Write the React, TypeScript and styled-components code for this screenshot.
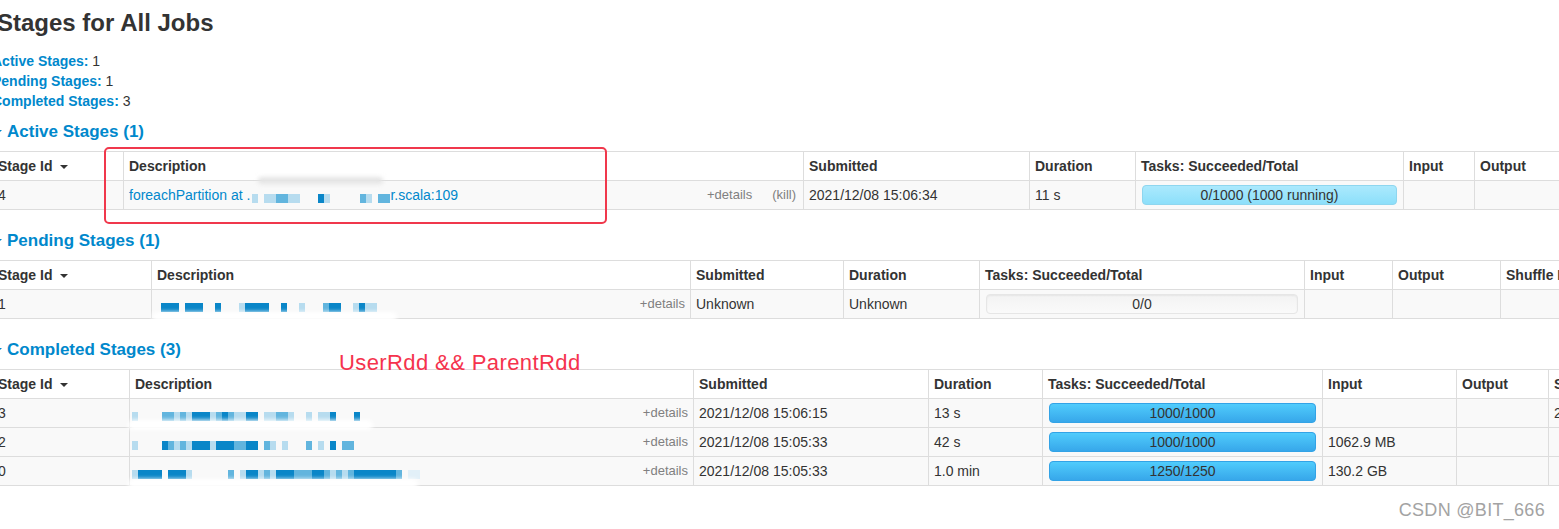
import React from "react";
import styled, { createGlobalStyle } from "styled-components";

const GlobalStyle = createGlobalStyle`
  html, body {
    margin: 0;
    padding: 0;
    background: #fff;
  }
  body {
    font-family: "Liberation Sans", Arial, Helvetica, sans-serif;
    font-size: 14px;
    color: #333;
    overflow: hidden;
  }
`;

const Page = styled.div`
  position: relative;
  width: 1559px;
  height: 529px;
  overflow: hidden;
`;

const Content = styled.div`
  margin-left: -8px;
  width: 1900px;
`;

const Title = styled.h3`
  margin: 8px 0 0 5px;
  font-size: 24px;
  line-height: 30px;
  font-weight: bold;
  color: #333;
`;

const Summary = styled.ul`
  list-style: none;
  margin: 13px 0 0;
  padding: 0;
  line-height: 20px;
`;

const SummaryLabel = styled.strong`
  color: #0088cc;
`;

const SectionTitle = styled.h4<{ $first?: boolean }>`
  display: flex;
  align-items: center;
  gap: 5px;
  margin: ${(p) => (p.$first ? "10px" : "20px")} 0 8px;
  font-size: 17px;
  line-height: 22px;
  font-weight: bold;
  color: #0088cc;
`;

const Arrow = styled.span`
  width: 0;
  height: 0;
  border-left: 5px solid transparent;
  border-right: 5px solid transparent;
  border-top: 5px solid #0088cc;
`;

const Table = styled.table`
  border-collapse: collapse;
  table-layout: fixed;
`;

const Th = styled.th<{ $w: number }>`
  box-sizing: border-box;
  width: ${(p) => p.$w}px;
  height: 29px;
  padding: 4px 5px;
  border: 1px solid #ddd;
  background: #fff;
  text-align: left;
  font-weight: bold;
  line-height: 20px;
  white-space: nowrap;
  overflow: hidden;
`;

const Td = styled.td`
  box-sizing: border-box;
  height: 29px;
  padding: 4px 5px;
  border: 1px solid #ddd;
  background: #f9f9f9;
  line-height: 20px;
  white-space: nowrap;
  overflow: hidden;
  vertical-align: middle;
`;

const Caret = styled.span`
  display: inline-block;
  margin-left: 8px;
  vertical-align: middle;
  width: 0;
  height: 0;
  border-left: 4px solid transparent;
  border-right: 4px solid transparent;
  border-top: 4px solid #333;
`;

const DescBody = styled.div`
  display: flex;
  align-items: center;
  height: 20px;
`;

const DescLink = styled.a`
  color: #0088cc;
  text-decoration: none;
`;

const Details = styled.span`
  margin-left: auto;
  color: #808080;
  font-size: 13px;
`;

const Kill = styled.span`
  margin-left: 20px;
  margin-right: 2px;
  color: #808080;
  font-size: 13px;
`;

const MosaicRow = styled.span<{ $offset: number }>`
  display: inline-flex;
  align-items: flex-end;
  box-sizing: border-box;
  height: 20px;
  padding-bottom: 2px;
  margin-left: ${(p) => p.$offset}px;
`;

const Pixel = styled.span<{ $c: string }>`
  width: 6px;
  height: 9px;
  background: ${(p) => p.$c};
`;

const Progress = styled.div<{ $kind: "running" | "done" | "empty" }>`
  box-sizing: border-box;
  height: 20px;
  margin: 0 1px;
  border-radius: 4px;
  text-align: center;
  line-height: 18px;
  color: #333;
  border: 1px solid
    ${(p) =>
      p.$kind === "running" ? "#8ed6ef" : p.$kind === "done" ? "#33a3e6" : "#e6e6e6"};
  background: ${(p) =>
    p.$kind === "running"
      ? "linear-gradient(to bottom, #abe9fd, #8cdffa)"
      : p.$kind === "done"
      ? "linear-gradient(to bottom, #50ccfc, #37a7ea)"
      : "linear-gradient(to bottom, #f3f3f3, #fafafa)"};
  box-shadow: ${(p) =>
    p.$kind === "empty" ? "inset 0 1px 2px rgba(0,0,0,0.06)" : "none"};
`;

const Smudge = styled.div<{ $gray?: boolean }>`
  position: absolute;
  background: ${(p) => (p.$gray ? "#e4e4e4" : "#fff")};
  border-radius: 8px;
  filter: blur(2px);
`;

const RedBox = styled.div`
  position: absolute;
  left: 104px;
  top: 147px;
  width: 503px;
  height: 77px;
  box-sizing: border-box;
  border: 2px solid #f0384c;
  border-radius: 5px;
`;

const Note = styled.div`
  position: absolute;
  left: 339px;
  top: 352px;
  font-size: 22px;
  line-height: 22px;
  letter-spacing: 0.4px;
  color: #f5334d;
`;

const Watermark = styled.div`
  position: absolute;
  right: 14px;
  top: 501px;
  font-size: 18px;
  line-height: 18px;
  color: #a3a3a3;
  letter-spacing: 0.3px;
`;

const PALETTE: Record<string, string> = {
  l: "#e2f0f8",
  L: "#b7dcef",
  M: "#62b5de",
  D: "#0a86c8",
};

const Mosaic = ({ pattern, offset = 0 }: { pattern: string; offset?: number }) => (
  <MosaicRow $offset={offset}>
    {pattern.split("").map((ch, i) => (
      <Pixel key={i} $c={PALETTE[ch] ?? "transparent"} />
    ))}
  </MosaicRow>
);

type Col = [string, number];

const Header = ({ cols }: { cols: Col[] }) => (
  <thead>
    <tr>
      {cols.map(([title, w], i) => (
        <Th key={title} $w={w}>
          {title}
          {i === 0 && <Caret />}
        </Th>
      ))}
    </tr>
  </thead>
);

const activeCols: Col[] = [
  ["Stage Id", 131],
  ["Description", 680],
  ["Submitted", 226],
  ["Duration", 106],
  ["Tasks: Succeeded/Total", 268],
  ["Input", 71],
  ["Output", 130],
  ["Shuffle Read", 130],
  ["Shuffle Write", 130],
];

const pendingCols: Col[] = [
  ["Stage Id", 159],
  ["Description", 539],
  ["Submitted", 153],
  ["Duration", 136],
  ["Tasks: Succeeded/Total", 325],
  ["Input", 88],
  ["Output", 108],
  ["Shuffle Read", 130],
  ["Shuffle Write", 130],
];

const completedCols: Col[] = [
  ["Stage Id", 137],
  ["Description", 564],
  ["Submitted", 235],
  ["Duration", 114],
  ["Tasks: Succeeded/Total", 280],
  ["Input", 134],
  ["Output", 92],
  ["Shuffle Read", 130],
  ["Shuffle Write", 130],
];

const sum = (cols: Col[]) => cols.reduce((a, [, w]) => a + w, 0);

const completed = [
  {
    id: "3",
    pattern: "L....MMLMLDDDLMDMLLDD.LLMML..L.LLD...D",
    submitted: "2021/12/08 15:06:15",
    duration: "13 s",
    tasks: "1000/1000",
    input: "",
    shuffle: "2.1 GB",
  },
  {
    id: "2",
    pattern: "L....DMLMLDDDLDDDMMDD.ML.L...M.L.D.MM",
    submitted: "2021/12/08 15:05:33",
    duration: "42 s",
    tasks: "1000/1000",
    input: "1062.9 MB",
    shuffle: "",
  },
  {
    id: "0",
    pattern: "LDDDD.DDDL......M.LDDLMLDDDMMMDDMLMLMDDDDDDDM.ll",
    submitted: "2021/12/08 15:05:33",
    duration: "1.0 min",
    tasks: "1250/1250",
    input: "130.2 GB",
    shuffle: "",
  },
];

export default function App() {
  return (
    <Page>
      <GlobalStyle />
      <Content>
        <Title>Stages for All Jobs</Title>
        <Summary>
          <li>
            <SummaryLabel>Active Stages:</SummaryLabel> 1
          </li>
          <li>
            <SummaryLabel>Pending Stages:</SummaryLabel> 1
          </li>
          <li>
            <SummaryLabel>Completed Stages:</SummaryLabel> 3
          </li>
        </Summary>

        <SectionTitle $first>
          <Arrow />
          Active Stages (1)
        </SectionTitle>
        <Table style={{ width: sum(activeCols) }}>
          <Header cols={activeCols} />
          <tbody>
            <tr>
              <Td>4</Td>
              <Td>
                <DescBody>
                  <DescLink>foreachPartition at .</DescLink>
                  <Mosaic pattern="L.LLMMLL...DL.....ML.MM" offset={2} />
                  <DescLink>r.scala:109</DescLink>
                  <Details>+details</Details>
                  <Kill>(kill)</Kill>
                </DescBody>
              </Td>
              <Td>2021/12/08 15:06:34</Td>
              <Td>11 s</Td>
              <Td>
                <Progress $kind="running">0/1000 (1000 running)</Progress>
              </Td>
              <Td />
              <Td />
              <Td />
              <Td />
            </tr>
          </tbody>
        </Table>

        <SectionTitle>
          <Arrow />
          Pending Stages (1)
        </SectionTitle>
        <Table style={{ width: sum(pendingCols) }}>
          <Header cols={pendingCols} />
          <tbody>
            <tr>
              <Td>1</Td>
              <Td>
                <DescBody>
                  <Mosaic pattern="DDD.DDD..D...LDDDD..D..L...MDD..LDLL" offset={4} />
                  <Details>+details</Details>
                </DescBody>
              </Td>
              <Td>Unknown</Td>
              <Td>Unknown</Td>
              <Td>
                <Progress $kind="empty">0/0</Progress>
              </Td>
              <Td />
              <Td />
              <Td />
              <Td />
            </tr>
          </tbody>
        </Table>

        <SectionTitle>
          <Arrow />
          Completed Stages (3)
        </SectionTitle>
        <Table style={{ width: sum(completedCols) }}>
          <Header cols={completedCols} />
          <tbody>
            {completed.map((s) => (
              <tr key={s.id}>
                <Td>{s.id}</Td>
                <Td>
                  <DescBody>
                    <Mosaic pattern={s.pattern} offset={-3} />
                    <Details>+details</Details>
                  </DescBody>
                </Td>
                <Td>{s.submitted}</Td>
                <Td>{s.duration}</Td>
                <Td>
                  <Progress $kind="done">{s.tasks}</Progress>
                </Td>
                <Td>{s.input}</Td>
                <Td />
                <Td>{s.shuffle}</Td>
                <Td />
              </tr>
            ))}
          </tbody>
        </Table>
      </Content>

      <Smudge $gray style={{ left: 258, top: 177, width: 125, height: 7 }} />
      <Smudge style={{ left: 152, top: 312, width: 245, height: 9 }} />
      <Smudge style={{ left: 128, top: 420, width: 245, height: 10 }} />
      <Smudge style={{ left: 128, top: 479, width: 290, height: 9 }} />

      <RedBox />
      <Note>UserRdd &amp;&amp; ParentRdd</Note>
      <Watermark>CSDN @BIT_666</Watermark>
    </Page>
  );
}
